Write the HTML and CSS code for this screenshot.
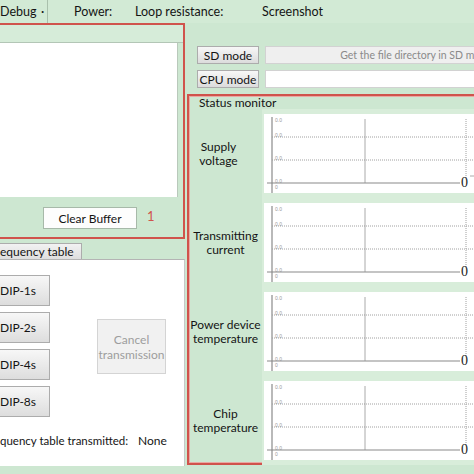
FILE: index.html
```html
<!DOCTYPE html>
<html lang="en">
<head>
    <meta charset="UTF-8">
    <meta name="viewport" content="width=device-width, initial-scale=1.0">
    <title>Status monitor</title>
    <link rel="stylesheet" href="styles.css">
</head>
<body>
    <div class="topbar">
        <span class="menu">Debug</span>
        <span class="menu-arrow">·</span>
        <span class="sep"></span>
        <span class="item item-power">Power:</span>
        <span class="item item-loop">Loop resistance:</span>
        <span class="item item-shot">Screenshot</span>
    </div>

    <div class="main">
        <div class="left">
            <div class="buffer">
                <div class="buffer-head"></div>
                <div class="buffer-text"></div>
                <div class="buffer-foot">
                    <button class="btn-clear">Clear Buffer</button>
                    <span class="mark">1</span>
                </div>
            </div>

            <div class="tabs">
                <div class="tab">equency table</div>
            </div>
            <div class="panel">
                <div class="panel-body">
                    <div class="dip-list">
                        <button class="btn-dip">DIP-1s</button>
                        <button class="btn-dip">DIP-2s</button>
                        <button class="btn-dip">DIP-4s</button>
                        <button class="btn-dip">DIP-8s</button>
                    </div>
                    <button class="btn-cancel" disabled>Cancel<br>transmission</button>
                </div>
                <div class="sent">
                    <span class="sent-label">quency table transmitted:</span>
                    <span class="sent-value">None</span>
                </div>
            </div>
        </div>

        <div class="right">
            <div class="modes">
                <div class="mode-row">
                    <button class="btn-mode">SD mode</button>
                    <div class="field field-sd">Get the file directory in SD mode</div>
                </div>
                <div class="mode-row">
                    <button class="btn-mode">CPU mode</button>
                    <div class="field field-cpu"></div>
                </div>
            </div>

            <div class="status">
                <div class="status-title">Status monitor</div>
                <div class="status-grid">
                    <div class="label label-first">Supply<br>voltage</div>
                    <div class="chart-cell">
                        <div class="chart">
                            <svg class="plot" width="210" height="79" viewBox="0 0 210 79">
                                <line class="axis" x1="8" y1="3" x2="8" y2="79"/>
                                <line class="axis" x1="3" y1="69" x2="196" y2="69"/>
                                <line class="grid" x1="8" y1="23" x2="210" y2="23"/>
                                <line class="grid" x1="8" y1="46" x2="210" y2="46"/>
                                <line class="vgrid" x1="101" y1="5" x2="101" y2="69"/>
                                <line class="grid" x1="202" y1="5" x2="202" y2="64"/>
                                <line class="vgrid" x1="206" y1="62" x2="210" y2="62"/>
                                <text class="tick" x="11" y="8">0.0</text>
                                <text class="tick" x="11" y="23">0.0</text>
                                <text class="tick" x="11" y="46">0.0</text>
                                <text class="tick" x="11" y="69">0.0</text>
                                <text class="tick" x="11" y="75">0</text>
                                <text class="zero" x="197" y="73">0</text>
                            </svg>
                        </div>
                    </div>

                    <div class="label">Transmitting<br>current</div>
                    <div class="chart-cell">
                        <div class="chart">
                            <svg class="plot" width="210" height="79" viewBox="0 0 210 79">
                                <line class="axis" x1="8" y1="3" x2="8" y2="79"/>
                                <line class="axis" x1="3" y1="69" x2="196" y2="69"/>
                                <line class="grid" x1="8" y1="23" x2="210" y2="23"/>
                                <line class="grid" x1="8" y1="46" x2="210" y2="46"/>
                                <line class="vgrid" x1="101" y1="5" x2="101" y2="69"/>
                                <line class="grid" x1="202" y1="5" x2="202" y2="64"/>
                                <text class="tick" x="11" y="8">0.0</text>
                                <text class="tick" x="11" y="23">0.0</text>
                                <text class="tick" x="11" y="46">0.0</text>
                                <text class="tick" x="11" y="69">0.0</text>
                                <text class="tick" x="11" y="75">0</text>
                                <text class="zero" x="197" y="73">0</text>
                            </svg>
                        </div>
                    </div>

                    <div class="label">Power device<br>temperature</div>
                    <div class="chart-cell">
                        <div class="chart">
                            <svg class="plot" width="210" height="79" viewBox="0 0 210 79">
                                <line class="axis" x1="8" y1="3" x2="8" y2="79"/>
                                <line class="axis" x1="3" y1="69" x2="196" y2="69"/>
                                <line class="grid" x1="8" y1="23" x2="210" y2="23"/>
                                <line class="grid" x1="8" y1="46" x2="210" y2="46"/>
                                <line class="vgrid" x1="101" y1="5" x2="101" y2="69"/>
                                <line class="grid" x1="202" y1="5" x2="202" y2="64"/>
                                <text class="tick" x="11" y="8">0.0</text>
                                <text class="tick" x="11" y="23">0.0</text>
                                <text class="tick" x="11" y="46">0.0</text>
                                <text class="tick" x="11" y="69">0.0</text>
                                <text class="tick" x="11" y="75">0</text>
                                <text class="zero" x="197" y="73">0</text>
                            </svg>
                        </div>
                    </div>

                    <div class="label">Chip<br>temperature</div>
                    <div class="chart-cell">
                        <div class="chart">
                            <svg class="plot" width="210" height="79" viewBox="0 0 210 79">
                                <line class="axis" x1="8" y1="3" x2="8" y2="79"/>
                                <line class="axis" x1="3" y1="69" x2="196" y2="69"/>
                                <line class="grid" x1="8" y1="23" x2="210" y2="23"/>
                                <line class="grid" x1="8" y1="46" x2="210" y2="46"/>
                                <line class="vgrid" x1="101" y1="5" x2="101" y2="69"/>
                                <line class="grid" x1="202" y1="5" x2="202" y2="64"/>
                                <text class="tick" x="11" y="8">0.0</text>
                                <text class="tick" x="11" y="23">0.0</text>
                                <text class="tick" x="11" y="46">0.0</text>
                                <text class="tick" x="11" y="69">0.0</text>
                                <text class="tick" x="11" y="75">0</text>
                                <text class="zero" x="197" y="73">0</text>
                            </svg>
                        </div>
                    </div>
                </div>
            </div>
        </div>
    </div>
</body>
</html>
```

FILE: styles.css
```css
body {
    margin: 0;
    width: 474px;
    height: 474px;
    overflow: hidden;
    background-color: #cde7d1;
    font-family: Lato, "Noto Sans", sans-serif;
    font-size: 12px;
    color: #141414;
}

button {
    font-family: inherit;
    font-size: 12px;
    color: #141414;
    padding: 0;
    margin: 0;
    white-space: nowrap;
}

/* top bar */
.topbar {
    height: 23px;
    display: flex;
    align-items: center;
    background-color: #d2ead5;
    font-size: 12.5px;
    white-space: nowrap;
}

.menu {
    width: 41px;
    flex-shrink: 0;
}

.menu-arrow {
    width: 6px;
    flex-shrink: 0;
}

.sep {
    align-self: stretch;
    width: 1px;
    flex-shrink: 0;
    background-color: #a9c0ac;
}

.item-power {
    margin-left: 26px;
    width: 61px;
    flex-shrink: 0;
}

.item-loop {
    width: 127px;
    flex-shrink: 0;
}

.main {
    display: grid;
    grid-template-columns: 185px 289px;
    height: 451px;
}

/* left column */
.buffer {
    height: 216px;
    box-sizing: border-box;
    border-top: 2px solid #d0534c;
    border-right: 2px solid #d0534c;
    border-bottom: 2px solid #d0534c;
}

.buffer-head {
    height: 17px;
    background-color: #d6ecd9;
    border-bottom: 1px solid #b3c6b6;
}

.buffer-text {
    width: 177px;
    height: 154px;
    background-color: #fff;
    border-right: 1px solid #b9c9bb;
}

.buffer-foot {
    display: flex;
    align-items: flex-start;
    padding-top: 10px;
}

.btn-clear {
    margin-left: 43px;
    width: 94px;
    height: 22px;
    background-color: #fdfdfd;
    border: 1px solid #a7b9a9;
}

.mark {
    margin-left: 10px;
    margin-top: 1px;
    color: #d0534c;
    font-size: 13px;
}

.tabs {
    margin-top: 4px;
    display: flex;
}

.tab {
    width: 82px;
    height: 16px;
    box-sizing: border-box;
    line-height: 15px;
    background: linear-gradient(#f2f2f2, #dedede);
    border: 1px solid #acacac;
    border-left: none;
    border-bottom: none;
    white-space: nowrap;
}

.panel {
    height: 207px;
    background-color: #fff;
    border-top: 1px solid #b4b4b4;
    border-right: 1px solid #c8c8c8;
    box-sizing: border-box;
    padding-top: 15px;
}

.panel-body {
    display: flex;
    align-items: flex-start;
}

.dip-list {
    display: flex;
    flex-direction: column;
    gap: 6px;
}

.btn-dip {
    width: 50px;
    height: 31px;
    text-align: left;
    background: linear-gradient(#f7f7f7, #dddddd);
    border: 1px solid #acacac;
    border-left: none;
}

.btn-cancel {
    margin-left: 47px;
    margin-top: 44px;
    width: 69px;
    height: 55px;
    line-height: 15px;
    color: #9d9d9d;
    background-color: #f1f1f1;
    border: 1px solid #d4d4d4;
}

.sent {
    margin-top: 17px;
    display: flex;
    line-height: 14px;
    font-size: 11.5px;
    white-space: nowrap;
}

.sent-label {
    width: 138px;
    flex-shrink: 0;
}

.sent-value {
    font-size: 12px;
}

/* right column */
.modes {
    padding: 23px 0 0 12px;
}

.mode-row {
    display: flex;
    height: 18px;
    margin-bottom: 6px;
}

.btn-mode {
    width: 62px;
    height: 18px;
    flex-shrink: 0;
    background: linear-gradient(#f7f7f7, #dcdcdc);
    border: 1px solid #acacac;
    font-size: 12px;
}

.field {
    margin-left: 6px;
    width: 302px;
    flex-shrink: 0;
    box-sizing: border-box;
    border: 1px solid #d2d2d2;
    line-height: 16px;
    font-size: 10.5px;
    text-align: center;
    color: #8a8a8a;
    white-space: nowrap;
}

.field-sd {
    background-color: #efefef;
}

.field-cpu {
    background-color: #fff;
}

.status {
    margin-top: 1px;
    margin-left: 2px;
    height: 371px;
    box-sizing: border-box;
    border: 2px solid #d0534c;
    border-right: none;
    box-shadow: inset 1px 1px 0 #eaa9a3, inset 0 -1px 0 #eaa9a3;
}

.status-title {
    height: 13px;
    line-height: 13px;
    padding-left: 10px;
    font-size: 12px;
}

.status-grid {
    display: grid;
    grid-template-columns: 73px 212px;
    grid-auto-rows: 89px;
}

.label {
    display: flex;
    align-items: center;
    justify-content: center;
    text-align: center;
    line-height: 14.5px;
    font-size: 12px;
    padding-top: 1px;
    white-space: nowrap;
}

.label-first {
    padding-right: 14px;
}

.chart-cell {
    background-color: #d8edda;
    padding: 5px 0 5px 2px;
}

.chart {
    height: 79px;
    background-color: #fff;
    overflow: hidden;
}

.plot {
    display: block;
}

.axis {
    stroke: #8a8a8a;
    stroke-width: 1.2;
}

.grid {
    stroke: #a0a0a0;
    stroke-width: 1;
    stroke-dasharray: 1 1;
}

.vgrid {
    stroke: #959595;
    stroke-width: 0.8;
}

.tick {
    font-family: "Liberation Sans", sans-serif;
    font-size: 5px;
    fill: #9a9a9a;
}

.zero {
    font-family: "Liberation Serif", serif;
    font-size: 14px;
    fill: #222;
}
```
